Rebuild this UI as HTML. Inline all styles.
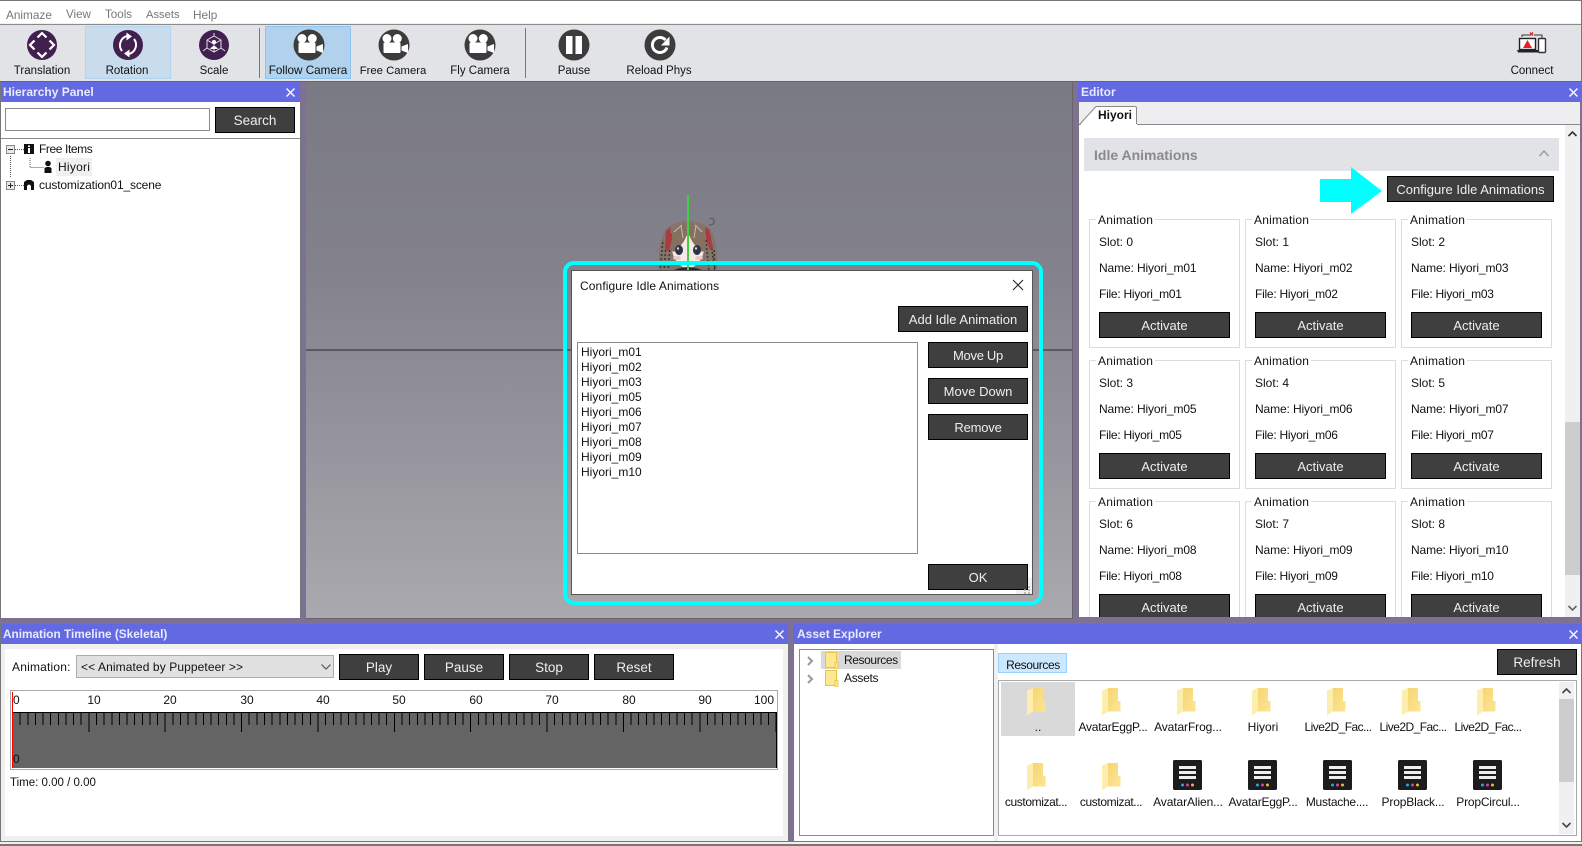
<!DOCTYPE html>
<html><head><meta charset="utf-8"><title>Animaze</title>
<style>
html,body{margin:0;padding:0}
body{width:1582px;height:846px;overflow:hidden;position:relative;background:#7f7096;font:12px "Liberation Sans",sans-serif;color:#111}
div,span,svg{position:absolute}
.t{white-space:nowrap;line-height:16px;height:16px}
.c{transform:translateX(-50%)}
.bt{box-sizing:border-box;background:#3f3f3f;border:1px solid #000;color:#eee;font-size:13px;display:flex;align-items:center;justify-content:center;white-space:nowrap}
.bt.l{font-size:13.5px}
.h{background:#6369e0;height:20px;color:#e8ebff;font-weight:bold;font-size:12px;line-height:20px}
.h b{position:absolute;left:3px;top:0}
.x{width:9px;height:9px;top:6px}
.lab{font-size:11.5px}
.card{box-sizing:border-box;width:151px;height:129px;border:1px solid #dcdcdc}
.card .lg{left:6px;top:-8px;background:#fff;padding:0 2px;font-size:12px;line-height:16px;white-space:nowrap;letter-spacing:.2px}
.card .r{left:9px;font-size:12px;line-height:16px;white-space:nowrap}
.card .r:nth-child(3){letter-spacing:-.12px}
.card .r:nth-child(4){letter-spacing:-.25px}
.card .bt{left:9px;top:92px;width:131px;height:26px}
.lv{letter-spacing:-.55px}
.cu{letter-spacing:-.4px}
.ra{letter-spacing:-.25px}
</style></head><body>

<!-- top -->
<div style="left:0;top:0;width:1582px;height:1px;background:#777"></div>
<div style="left:0;top:1px;width:1582px;height:22px;background:#fff"></div>
<div style="left:0;top:23px;width:1582px;height:2px;background:#f0f0f0"></div>
<div style="left:0;top:24px;width:1582px;height:1px;background:#8a8a8a"></div>
<div class="t" style="left:6px;top:7px;color:#777;font-size:11.8px">Animaze</div>
<div class="t" style="left:66px;top:7px;color:#777;font-size:11.6px">View</div>
<div class="t" style="left:105px;top:7px;color:#777;font-size:11.6px">Tools</div>
<div class="t" style="left:146px;top:7px;color:#777;font-size:11.2px">Assets</div>
<div class="t" style="left:193px;top:7px;color:#777;font-size:11.8px">Help</div>

<!-- toolbar -->
<div style="left:0;top:25px;width:1582px;height:56px;background:#e2e3e7"></div>
<div style="left:0;top:81px;width:1582px;height:1px;background:#666"></div>
<div style="box-sizing:border-box;left:85px;top:26px;width:86px;height:53px;background:#c9dcec;border:1px solid #b3d3ee"></div>
<div style="box-sizing:border-box;left:265px;top:26px;width:86px;height:53px;background:#b1d1ec;border:1px solid #8cc4f2"></div>
<div style="left:259px;top:28px;width:1px;height:50px;background:#777"></div>
<div style="left:525px;top:28px;width:1px;height:50px;background:#777"></div>

<svg style="left:0;top:25px" width="700" height="40" viewBox="0 25 700 40">
 <defs>
  <g id="cam"><circle r="15.5" fill="#3c3c3c"/><circle cx="-7" cy="-6.500" r="4.500" fill="#fff"/><circle cx="3.300" cy="-6.500" r="4.500" fill="#fff"/><rect x="-10.500" y="-2.500" width="17" height="10.500" rx="1" fill="#fff"/><path d="M7.500 1.500 14-1V8L7.500 5.500z" fill="#fff"/></g>
 </defs>
 <!-- translation -->
 <circle cx="42" cy="45" r="15" fill="#41204f"/>
 <path d="M37.500 37.500l4.500-4.500 4.500 4.500M37.500 52.500l4.500 4.500 4.500-4.500M34.500 40.500l-4.500 4.500 4.500 4.500M49.500 40.500l4.500 4.500-4.500 4.500" fill="none" stroke="#fff" stroke-width="2.200"/>
 <!-- rotation -->
 <circle cx="128" cy="45" r="15" fill="#41204f"/>
 <path d="M122 51a9.500 9.500 0 0 1 5-15M134 39a9.500 9.500 0 0 1-5 15" fill="none" stroke="#fff" stroke-width="2"/>
 <path d="M126.500 32.500l5.500 4-5.500 4zM129.500 49.500l-5.500 4 5.500 4z" fill="#fff"/>
 <!-- scale -->
 <circle cx="214" cy="45" r="15" fill="#41204f"/>
 <path d="M214 36l7 4v8l-7 4-7-4v-8zM207 40l7 4 7-4M214 44v8M214 36v-3M207 48l-4 3M221 48l4 3" fill="none" stroke="#e5dce8" stroke-width="1"/>
 <circle cx="214" cy="42" r="2" fill="#fff"/><path d="M210 49q4-6 8 0z" fill="#fff"/>
 <use href="#cam" x="309" y="45"/><use href="#cam" x="394" y="45"/><use href="#cam" x="480" y="45"/>
 <!-- pause -->
 <circle cx="574" cy="45" r="15.500" fill="#3c3c3c"/>
 <rect x="566" y="36" width="6.500" height="18" fill="#fff"/><rect x="575.500" y="36" width="6.500" height="18" fill="#fff"/>
 <!-- reload -->
 <circle cx="660" cy="45" r="15.500" fill="#3c3c3c"/>
 <path d="M667 47.500a7.500 7.500 0 1 1-1.500-7.500" fill="none" stroke="#fff" stroke-width="3"/>
 <path d="M669.500 36.500v9h-8.500z" fill="#fff"/>
</svg>
<div class="t c lab" style="left:42px;top:63px">Translation</div>
<div class="t c lab" style="left:127px;top:63px">Rotation</div>
<div class="t c lab" style="left:214px;top:63px">Scale</div>
<div class="t c lab" style="left:308px;top:63px;font-size:11.7px">Follow Camera</div>
<div class="t c lab" style="left:393px;top:63px;font-size:11.3px">Free Camera</div>
<div class="t c lab" style="left:480px;top:63px">Fly Camera</div>
<div class="t c lab" style="left:574px;top:63px">Pause</div>
<div class="t c lab" style="left:659px;top:63px">Reload Phys</div>
<div class="t c lab" style="left:1532px;top:63px">Connect</div>
<svg style="left:1516px;top:32px" width="32" height="24" viewBox="0 0 32 24">
 <path d="M6 5V3h9M18 3h8v3" fill="none" stroke="#333" stroke-width="1"/>
 <path d="M14 .500l3 3M17 .500l-3 3" stroke="#e0202a" stroke-width="1.300"/>
 <rect x="3.500" y="6.500" width="16" height="11" fill="#fff" stroke="#222" stroke-width="1.400"/>
 <path d="M1 18h21v2.500H2z" fill="#222"/>
 <path d="M11.500 8l4.500 8H7z" fill="#e0202a"/>
 <rect x="22.500" y="6.500" width="7" height="14" rx="1" fill="#fff" stroke="#333" stroke-width="1.400"/>
</svg>

<!-- hierarchy -->
<div style="left:0;top:82px;width:1px;height:536px;background:#777"></div>
<div class="h" style="left:1px;top:82px;width:299px"><b style="left:2px">Hierarchy Panel</b><svg class="x" style="left:285px"><path d="M.500.500l8 8M8.500.500l-8 8" stroke="#fff" stroke-width="1.400"/></svg></div>
<div style="left:1px;top:102px;width:299px;height:516px;background:#fff"></div>
<div style="left:300px;top:102px;width:1px;height:516px;background:#777"></div>
<div style="box-sizing:border-box;left:5px;top:108px;width:205px;height:23px;border:1px solid #8a8a8a;background:#fff"></div>
<div class="bt l" style="left:215px;top:107px;width:80px;height:26px">Search</div>
<div style="left:1px;top:138px;width:299px;height:1px;background:#8a8a8a"></div>
<svg style="left:1px;top:140px" width="60" height="60" viewBox="1 140 60 60">
 <path d="M10.500 156v22M15 149.500h9M30 158v9.500h14M15 185.500h9" stroke="#555" stroke-dasharray="1 1" fill="none"/>
 <rect x="6.500" y="145.500" width="8" height="8" fill="#e8e8ee" stroke="#888"/><path d="M8 149.500h5" stroke="#223"/>
 <rect x="6.500" y="181.500" width="8" height="8" fill="#e8e8ee" stroke="#888"/><path d="M8 185.500h5M10.500 183v5" stroke="#223"/>
 <rect x="24" y="144" width="10" height="10" fill="#111"/><rect x="28" y="148" width="2" height="5" fill="#fff"/><rect x="28" y="145.500" width="2" height="1.500" fill="#fff"/>
 <circle cx="48" cy="163.500" r="2.800" fill="#111"/><path d="M44.500 173v-5l2-1h3l2 1v5z" fill="#111"/>
 <path d="M24 190v-8l3-2h4l3 2v8h-3v-4q-2-3-4 0v4z" fill="#111"/>
</svg>
<div style="left:56px;top:158px;width:36px;height:18px;background:#f0f0f0"></div>
<div class="t" style="left:39px;top:141px;letter-spacing:-.4px">Free Items</div>
<div class="t" style="left:58px;top:159px;letter-spacing:.25px">Hiyori</div>
<div class="t" style="left:39px;top:177px;letter-spacing:-.15px">customization01_scene</div>

<!-- viewport -->
<div style="box-sizing:border-box;left:306px;top:82px;width:767px;height:537px;border:1px solid #666;border-width:0 1px 1px 0;background:linear-gradient(#7a7a84,#83828c 35%,#97969e 70%,#aaa9ae)"></div>
<div style="left:306px;top:349px;width:766px;height:2px;background:#5a5a60"></div>
<svg style="left:650px;top:190px" width="80" height="82" viewBox="650 190 80 82">
 <path d="M659 272q-2-36 10-46 19-10 38 0 12 10 10 46z" fill="#85746a"/>
 <path d="M660 272l3-32M664 272l2-28M668 272l3-38M710 236l5 36M706 240l3 32M714 250l1 22" stroke="#3b332f" stroke-width="1.500" stroke-dasharray="2 2" fill="none"/>
 <path d="M672 248q0-12 16-12 16 0 16 12 0 14-16 22-16-8-16-22z" fill="#f4e9e4"/>
 <path d="M670 250q-1-20 15-27l1 14q-4 9-8 10l-4 5zM706 250q1-20-15-27l-1 14q4 9 8 10l4 5z" fill="#84705e"/>
 <path d="M674 232l8-7M683 238l-2-13M694 238l2-13M702 232l-7-7" stroke="#c9bcae" stroke-width="1" fill="none"/>
 <path d="M666 231l4-4 2 12-3 12-4-1zM709 229l-4-2 1 12 4 11 3-2z" fill="#a83c40"/>
 <ellipse cx="679" cy="250" rx="4" ry="5" fill="#2d3347"/><ellipse cx="697" cy="250" rx="4" ry="5" fill="#2d3347"/>
 <circle cx="678" cy="248.500" r="1.200" fill="#cfd6ea"/><circle cx="696" cy="248.500" r="1.200" fill="#cfd6ea"/>
 <ellipse cx="677" cy="258" rx="4" ry="2" fill="#eec6c2"/><ellipse cx="699" cy="258" rx="4" ry="2" fill="#eec6c2"/>
 <path d="M670 272q18-10 36 0z" fill="#2a2a2c"/>
 <path d="M709 225q6 0 5-5-2-3-4-1" fill="none" stroke="#5c5048"/>
 <rect x="687" y="195" width="2" height="75" fill="#3fd23f"/>
</svg>

<!-- dialog -->
<div style="box-sizing:border-box;left:563px;top:261px;width:480px;height:344px;border:4px solid #00ffff;border-radius:11px"></div>
<div style="box-sizing:border-box;left:571px;top:270px;width:462px;height:325px;background:#fff;border:1px solid #555"></div>
<div class="t" style="left:580px;top:278px;font-size:12px;letter-spacing:.1px">Configure Idle Animations</div>
<svg style="left:1012px;top:279px" width="12" height="12"><path d="M1 1l10 10M11 1L1 11" stroke="#222" stroke-width="1.100"/></svg>
<div class="bt" style="left:898px;top:306px;width:130px;height:26px">Add Idle Animation</div>
<div style="box-sizing:border-box;left:577px;top:342px;width:341px;height:212px;border:1px solid #8a8a8a;background:#fff"></div>
<div class="t" style="left:581px;top:344px">Hiyori_m01</div>
<div class="t" style="left:581px;top:359px">Hiyori_m02</div>
<div class="t" style="left:581px;top:374px">Hiyori_m03</div>
<div class="t" style="left:581px;top:389px">Hiyori_m05</div>
<div class="t" style="left:581px;top:404px">Hiyori_m06</div>
<div class="t" style="left:581px;top:419px">Hiyori_m07</div>
<div class="t" style="left:581px;top:434px">Hiyori_m08</div>
<div class="t" style="left:581px;top:449px">Hiyori_m09</div>
<div class="t" style="left:581px;top:464px">Hiyori_m10</div>
<div class="bt" style="left:928px;top:342px;width:100px;height:26px;letter-spacing:-.3px">Move Up</div>
<div class="bt" style="left:928px;top:378px;width:100px;height:26px">Move Down</div>
<div class="bt" style="left:928px;top:414px;width:100px;height:26px;letter-spacing:-.2px">Remove</div>
<div style="left:1016px;top:578px;width:16px;height:16px;background:#f0f0f0"></div>
<div class="bt" style="left:928px;top:564px;width:100px;height:26px">OK</div>
<svg style="left:1022px;top:586px" width="10" height="8"><path d="M6 1h2M2 4h2M6 4h2M2 7h2M6 7h2" stroke="#aaa" stroke-width="1.500"/></svg>

<!-- editor -->
<div class="h" style="left:1078px;top:82px;width:503px"><b>Editor</b><svg class="x" style="left:491px"><path d="M.500.500l8 8M8.500.500l-8 8" stroke="#fff" stroke-width="1.400"/></svg></div>
<div style="left:1079px;top:102px;width:501px;height:23px;background:#eeeef0"></div>
<div style="left:1078px;top:102px;width:1px;height:516px;background:#777"></div>
<div style="left:1079px;top:124px;width:501px;height:1px;background:#8a8a8a"></div>
<div style="left:1079px;top:125px;width:486px;height:492px;background:#fff;overflow:hidden"></div>
<svg style="left:1079px;top:105px" width="60" height="20"><path d="M.5 19.500L17 1.500h39q1.500 0 1.500 1.500v16.500" fill="#fff" stroke="#888"/></svg>
<div style="left:1081px;top:124px;width:56px;height:1px;background:#fff"></div>
<div class="t" style="left:1098px;top:107px;font-weight:bold;color:#111">Hiyori</div>
<div style="left:1565px;top:125px;width:15px;height:492px;background:#f0f0f0"></div>
<div style="left:1565px;top:422px;width:15px;height:153px;background:#cdcdcd"></div>
<svg style="left:1565px;top:128px" width="15" height="12"><path d="M3.500 8l4-4 4 4" fill="none" stroke="#333" stroke-width="1.600"/></svg>
<svg style="left:1565px;top:602px" width="15" height="12"><path d="M3.500 4l4 4 4-4" fill="none" stroke="#666" stroke-width="1.600"/></svg>
<div style="left:1084px;top:138px;width:475px;height:33px;background:#e2e3e7"></div>
<div class="t" style="left:1094px;top:147px;font-size:14px;font-weight:bold;color:#8a8a8a">Idle Animations</div>
<svg style="left:1538px;top:149px" width="12" height="9"><path d="M1.500 7l4.500-5 4.500 5" fill="none" stroke="#9a9a9a" stroke-width="1.400"/></svg>
<svg style="left:1320px;top:167px" width="63" height="47"><path d="M0 12h31V0l31 24-31 23V35H0z" fill="#00ffff"/></svg>
<div class="bt" style="left:1387px;top:176px;width:167px;height:26px">Configure Idle Animations</div>

<div style="left:1079px;top:205px;width:486px;height:412px;overflow:hidden">
<div class="card" style="left:10px;top:14px"><div class="lg">Animation</div><div class="r" style="top:14px">Slot: 0</div><div class="r" style="top:40px">Name: Hiyori_m01</div><div class="r" style="top:66px">File: Hiyori_m01</div><div class="bt">Activate</div></div>
<div class="card" style="left:166px;top:14px"><div class="lg">Animation</div><div class="r" style="top:14px">Slot: 1</div><div class="r" style="top:40px">Name: Hiyori_m02</div><div class="r" style="top:66px">File: Hiyori_m02</div><div class="bt">Activate</div></div>
<div class="card" style="left:322px;top:14px"><div class="lg">Animation</div><div class="r" style="top:14px">Slot: 2</div><div class="r" style="top:40px">Name: Hiyori_m03</div><div class="r" style="top:66px">File: Hiyori_m03</div><div class="bt">Activate</div></div>
<div class="card" style="left:10px;top:155px"><div class="lg">Animation</div><div class="r" style="top:14px">Slot: 3</div><div class="r" style="top:40px">Name: Hiyori_m05</div><div class="r" style="top:66px">File: Hiyori_m05</div><div class="bt">Activate</div></div>
<div class="card" style="left:166px;top:155px"><div class="lg">Animation</div><div class="r" style="top:14px">Slot: 4</div><div class="r" style="top:40px">Name: Hiyori_m06</div><div class="r" style="top:66px">File: Hiyori_m06</div><div class="bt">Activate</div></div>
<div class="card" style="left:322px;top:155px"><div class="lg">Animation</div><div class="r" style="top:14px">Slot: 5</div><div class="r" style="top:40px">Name: Hiyori_m07</div><div class="r" style="top:66px">File: Hiyori_m07</div><div class="bt">Activate</div></div>
<div class="card" style="left:10px;top:296px"><div class="lg">Animation</div><div class="r" style="top:14px">Slot: 6</div><div class="r" style="top:40px">Name: Hiyori_m08</div><div class="r" style="top:66px">File: Hiyori_m08</div><div class="bt">Activate</div></div>
<div class="card" style="left:166px;top:296px"><div class="lg">Animation</div><div class="r" style="top:14px">Slot: 7</div><div class="r" style="top:40px">Name: Hiyori_m09</div><div class="r" style="top:66px">File: Hiyori_m09</div><div class="bt">Activate</div></div>
<div class="card" style="left:322px;top:296px"><div class="lg">Animation</div><div class="r" style="top:14px">Slot: 8</div><div class="r" style="top:40px">Name: Hiyori_m10</div><div class="r" style="top:66px">File: Hiyori_m10</div><div class="bt">Activate</div></div>
</div>
<div style="left:1078px;top:617px;width:503px;height:1px;background:#777"></div>
<div style="left:1581px;top:0;width:1px;height:846px;background:#777"></div>

<!-- timeline -->
<div class="h" style="left:1px;top:624px;width:787px"><b style="left:2px;font-size:11.8px">Animation Timeline (Skeletal)</b><svg class="x" style="left:774px"><path d="M.500.500l8 8M8.500.500l-8 8" stroke="#fff" stroke-width="1.400"/></svg></div>
<div style="left:0;top:624px;width:1px;height:218px;background:#777"></div>
<div style="left:1px;top:644px;width:787px;height:197px;background:#f0f0f0"></div>
<div style="left:5px;top:649px;width:778px;height:187px;background:#fff"></div>
<div style="left:788px;top:644px;width:1px;height:197px;background:#777"></div>
<div class="t" style="left:12px;top:659px;letter-spacing:.2px">Animation:</div>
<div style="box-sizing:border-box;left:76px;top:655px;width:258px;height:23px;background:#e1e1e1;border:1px solid #adadad"></div>
<div class="t" style="left:81px;top:659px;letter-spacing:.1px">&lt;&lt; Animated by Puppeteer &gt;&gt;</div>
<svg style="left:320px;top:663px" width="12" height="8"><path d="M1.500 1.500L6 6l4.500-4.500" fill="none" stroke="#555" stroke-width="1.200"/></svg>
<div class="bt l" style="left:339px;top:654px;width:80px;height:26px">Play</div>
<div class="bt l" style="left:424px;top:654px;width:80px;height:26px">Pause</div>
<div class="bt l" style="left:509px;top:654px;width:80px;height:26px">Stop</div>
<div class="bt l" style="left:594px;top:654px;width:80px;height:26px">Reset</div>

<div style="box-sizing:border-box;left:10px;top:690px;width:768px;height:80px;border:1px solid #aaa;background:#fff"></div>
<div style="left:12px;top:712px;width:765px;height:56px;background:#646464"></div>
<div style="left:12px;top:712px;width:765px;height:1px;background:#000"></div>
<svg style="left:12px;top:712px" width="765" height="21" viewBox="12 712 765 21" shape-rendering="crispEdges">
 <path d="M12 718.500H777" stroke="#000" stroke-width="13" stroke-dasharray="1 6.637" fill="none"/>
 <path d="M12 722H777" stroke="#000" stroke-width="20" stroke-dasharray="1 75.370" fill="none"/>
</svg>
<div style="left:776px;top:712px;width:1px;height:56px;background:#000"></div>
<div style="left:12px;top:692px;width:1px;height:76px;background:#f00"></div>
<div class="t" style="left:13px;top:692px">0</div>
<div class="t c" style="left:94px;top:692px">10</div>
<div class="t c" style="left:170px;top:692px">20</div>
<div class="t c" style="left:247px;top:692px">30</div>
<div class="t c" style="left:323px;top:692px">40</div>
<div class="t c" style="left:399px;top:692px">50</div>
<div class="t c" style="left:476px;top:692px">60</div>
<div class="t c" style="left:552px;top:692px">70</div>
<div class="t c" style="left:629px;top:692px">80</div>
<div class="t c" style="left:705px;top:692px">90</div>
<div class="t c" style="left:764px;top:692px">100</div>
<div class="t" style="left:13px;top:751px">0</div>
<div class="t" style="left:10px;top:775px;font-size:11.5px">Time: 0.00 / 0.00</div>

<!-- asset explorer -->
<div class="h" style="left:793px;top:624px;width:788px"><b style="left:4px">Asset Explorer</b><svg class="x" style="left:776px"><path d="M.500.500l8 8M8.500.500l-8 8" stroke="#fff" stroke-width="1.400"/></svg></div>
<div style="left:793px;top:644px;width:1px;height:197px;background:#777"></div>
<div style="left:794px;top:644px;width:787px;height:197px;background:#fff"></div>
<div style="left:994px;top:644px;width:4px;height:197px;background:#f0f0f0"></div>
<div style="box-sizing:border-box;left:799px;top:649px;width:195px;height:187px;border:1px solid #8a8a8a;background:#fff"></div>
<div style="left:821px;top:651px;width:80px;height:18px;background:#d9d9d9"></div>
<svg style="left:806px;top:652px" width="36" height="36" viewBox="806 652 36 36">
 <path d="M808 657l4 4-4 4M808 675l4 4-4 4" fill="none" stroke="#999" stroke-width="2"/>
 <path d="M825.500 652.500h11v15h-11zM825.500 670.500h11v15h-11z" fill="#fde88f" stroke="#e9c443"/>
 <path d="M835 662.500h3v6h-3zM835 680.500h3v6h-3z" fill="#fde88f" stroke="#e9c443" stroke-width=".8"/>
</svg>
<div class="t" style="left:844px;top:652px;letter-spacing:-.4px">Resources</div>
<div class="t" style="left:844px;top:670px;letter-spacing:-.3px">Assets</div>
<div style="box-sizing:border-box;left:998px;top:653px;width:69px;height:20px;background:#cce8ff;border:1px solid #99d1ff"></div>
<div class="t c" style="left:1033px;top:657px;letter-spacing:-.4px">Resources</div>
<div class="bt l" style="left:1497px;top:649px;width:80px;height:26px">Refresh</div>
<div style="box-sizing:border-box;left:998px;top:680px;width:579px;height:156px;border:1px solid #aaa;background:#fff"></div>
<div style="left:1001px;top:682px;width:74px;height:54px;background:#d9d9d9"></div>
<div style="left:1559px;top:682px;width:15px;height:152px;background:#f0f0f0"></div>
<div style="left:1559px;top:699px;width:15px;height:83px;background:#cdcdcd"></div>
<svg style="left:1559px;top:685px" width="15" height="12"><path d="M3.500 8l4-4 4 4" fill="none" stroke="#444" stroke-width="1.600"/></svg>
<svg style="left:1559px;top:820px" width="15" height="12"><path d="M3.500 3l4 4 4-4" fill="none" stroke="#444" stroke-width="1.600"/></svg>

<svg style="left:1000px;top:685px" width="520" height="110" viewBox="1000 685 520 110">
 <defs>
  <linearGradient id="fg" x1="0" x2="1" y1="0" y2="1"><stop offset="0" stop-color="#f6d675"/><stop offset="1" stop-color="#fde594"/></linearGradient>
  <g id="fo"><path d="M6 0h10v13h2.500v10.500H6z" fill="url(#fg)"/><path d="M0 2.500 6 0v23.500l-6 4z" fill="#fdeeae"/></g>
  <g id="doc"><rect width="29" height="30" rx="1.500" fill="#1c1c1e"/><rect x="6" y="6" width="17" height="3" fill="#eee"/><rect x="6" y="11" width="17" height="3" fill="#eee"/><rect x="6" y="16" width="17" height="3" fill="#eee"/><circle cx="9.500" cy="25" r="1.500" fill="#2aa7df"/><circle cx="14.500" cy="25" r="1.500" fill="#d93ea0"/><circle cx="19.500" cy="25" r="1.500" fill="#e8b93a"/></g>
 </defs>
 <use href="#fo" x="1027" y="688"/><use href="#fo" x="1102" y="688"/><use href="#fo" x="1177" y="688"/><use href="#fo" x="1252" y="688"/><use href="#fo" x="1327" y="688"/><use href="#fo" x="1402" y="688"/><use href="#fo" x="1477" y="688"/>
 <use href="#fo" x="1027" y="763"/><use href="#fo" x="1102" y="763"/>
 <use href="#doc" x="1173" y="760"/><use href="#doc" x="1248" y="760"/><use href="#doc" x="1323" y="760"/><use href="#doc" x="1398" y="760"/><use href="#doc" x="1473" y="760"/>
</svg>
<div class="t c" style="left:1038px;top:719px">..</div>
<div class="t c ra" style="left:1113px;top:719px">AvatarEggP...</div>
<div class="t c" style="left:1188px;top:719px;letter-spacing:-.1px">AvatarFrog...</div>
<div class="t c" style="left:1263px;top:719px">Hiyori</div>
<div class="t c lv" style="left:1338px;top:719px">Live2D_Fac...</div>
<div class="t c lv" style="left:1413px;top:719px">Live2D_Fac...</div>
<div class="t c lv" style="left:1488px;top:719px">Live2D_Fac...</div>
<div class="t c cu" style="left:1036px;top:794px">customizat...</div>
<div class="t c cu" style="left:1111px;top:794px">customizat...</div>
<div class="t c" style="left:1188px;top:794px;letter-spacing:-.1px">AvatarAlien...</div>
<div class="t c ra" style="left:1263px;top:794px">AvatarEggP...</div>
<div class="t c ra" style="left:1337px;top:794px">Mustache....</div>
<div class="t c" style="left:1413px;top:794px;letter-spacing:-.15px">PropBlack...</div>
<div class="t c" style="left:1488px;top:794px;letter-spacing:-.2px">PropCircul...</div>

<!-- bottom -->
<div style="left:0;top:841px;width:1582px;height:1px;background:#777"></div>
<div style="left:0;top:842px;width:1582px;height:2px;background:#f0f0f0"></div>
<div style="left:0;top:844px;width:1582px;height:2px;background:#777"></div>
</body></html>
